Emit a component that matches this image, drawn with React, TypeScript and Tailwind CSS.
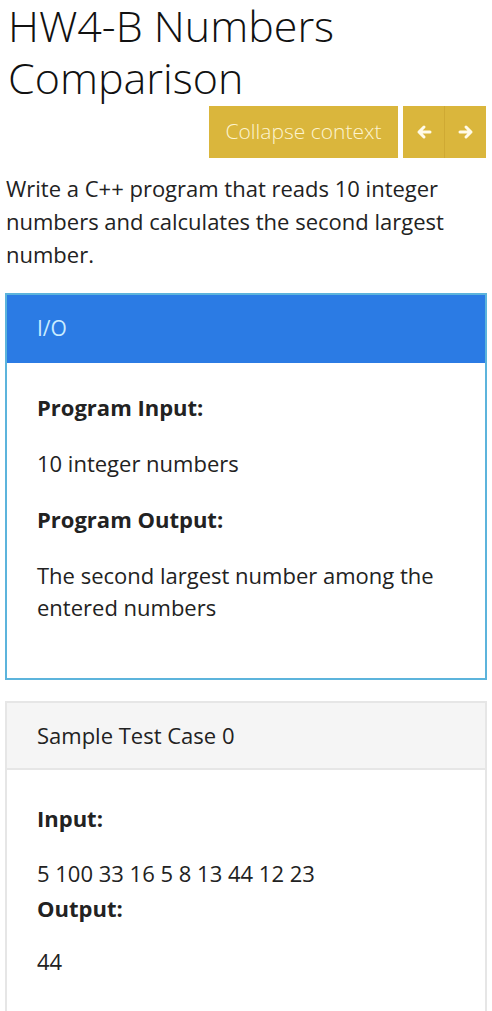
export default function App() {
  return (
    <div className="min-h-[1011px] bg-white font-['Open_Sans',sans-serif] text-[#222]">
      <h1 className="px-2 text-[43px] font-light leading-[52px] text-[#111]">
        HW4-B Numbers Comparison
      </h1>

      <div className="mt-[2px] flex justify-end gap-[5px] pr-[6px]">
        <button className="h-[52px] w-[189px] bg-[#dab63c] text-[21px] font-light text-[#fdf4d0]">
          Collapse context
        </button>
        <div className="flex h-[52px] w-[83px] bg-[#dab63c]">
          <button className="flex flex-1 items-center justify-center border-r border-[#cfa933]">
            <Arrow dir="left" />
          </button>
          <button className="flex flex-1 items-center justify-center">
            <Arrow dir="right" />
          </button>
        </div>
      </div>

      <p className="mt-[14px] px-[6px] text-[22px] leading-[33px] text-[#222]">
        Write a C++ program that reads 10 integer numbers and calculates the second largest number.
      </p>

      <section className="mx-[5px] mt-[22px] border-2 border-[#5cb4dc]">
        <div className="flex h-[68px] items-center bg-[#2b7be4] px-[30px] text-[21px] text-[#c9ecff]">
          I/O
        </div>
        <div className="px-[30px] pt-[28px] pb-[55px] text-[22px] leading-[32px]">
          <div className="font-bold">Program Input:</div>
          <div className="mt-[24px]">10 integer numbers</div>
          <div className="mt-[24px] font-bold">Program Output:</div>
          <div className="mt-[24px]">The second largest number among the entered numbers</div>
        </div>
      </section>

      <section className="mx-[5px] mt-[21px] border-2 border-[#e6e6e6]">
        <div className="flex h-[67px] items-center border-b-2 border-[#e6e6e6] bg-[#f5f5f5] px-[30px] text-[22px] text-[#222]">
          Sample Test Case 0
        </div>
        <div className="px-[30px] pt-[31px] pb-[60px] text-[22px] leading-[35px]">
          <div className="font-bold">Input:</div>
          <div className="mt-[20px]">5 100 33 16 5 8 13 44 12 23</div>
          <div className="font-bold">Output:</div>
          <div className="mt-[18px]">44</div>
        </div>
      </section>
    </div>
  );
}

function Arrow({ dir }: { dir: "left" | "right" }) {
  return (
    <svg width="16" height="16" viewBox="0 0 16 16" fill="none">
      <g transform={dir === "left" ? "" : "matrix(-1 0 0 1 16 0)"}>
        <path d="M14 8H3M8 3L3 8l5 5" stroke="#fffbe8" strokeWidth="3" strokeLinecap="round" strokeLinejoin="round" />
      </g>
    </svg>
  );
}
